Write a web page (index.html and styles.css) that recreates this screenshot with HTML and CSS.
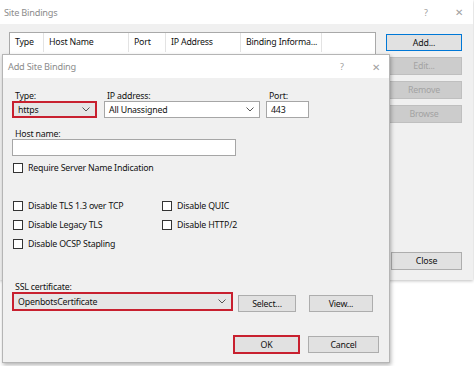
FILE: index.html
```html
<!DOCTYPE html>
<html lang="en">
<head>
    <meta charset="UTF-8">
    <meta name="viewport" content="width=device-width, initial-scale=1.0">
    <title>Site Bindings</title>
    <link rel="stylesheet" href="styles.css">
</head>
<body>

    <!-- Site Bindings window (behind) -->
    <div class="window">
        <div class="titlebar">
            <span class="title">Site Bindings</span>
            <span class="help">?</span>
            <span class="close-x">&#x2715;</span>
        </div>
        <div class="window-body">
            <div class="list">
                <div class="list-head">
                    <div class="col col-type">Type</div>
                    <div class="col col-host">Host Name</div>
                    <div class="col col-port">Port</div>
                    <div class="col col-ip">IP Address</div>
                    <div class="col col-bind">Binding Informa...</div>
                </div>
            </div>
            <div class="side-buttons">
                <button class="btn btn-default">Add...</button>
                <button class="btn" disabled>Edit...</button>
                <button class="btn" disabled>Remove</button>
                <button class="btn" disabled>Browse</button>
                <button class="btn btn-close">Close</button>
            </div>
        </div>
    </div>

    <!-- Add Site Binding dialog (on top) -->
    <div class="dialog">
        <div class="titlebar dialog-titlebar">
            <span class="title">Add Site Binding</span>
            <span class="help">?</span>
            <span class="close-x">&#x2715;</span>
        </div>
        <div class="dialog-body">
            <div class="field-row">
                <div class="field field-type">
                    <label>Type:</label>
                    <div class="combo combo-list marked">
                        <span>https</span>
                        <svg class="chevron" width="8" height="5" viewBox="0 0 8 5"><polyline points="0.5,0.5 4,4 7.5,0.5" fill="none" stroke="#555" stroke-width="1"/></svg>
                    </div>
                </div>
                <div class="field field-ip">
                    <label>IP address:</label>
                    <div class="combo">
                        <span>All Unassigned</span>
                        <svg class="chevron" width="8" height="5" viewBox="0 0 8 5"><polyline points="0.5,0.5 4,4 7.5,0.5" fill="none" stroke="#555" stroke-width="1"/></svg>
                    </div>
                </div>
                <div class="field field-port">
                    <label>Port:</label>
                    <div class="textbox">443</div>
                </div>
            </div>

            <div class="field field-host">
                <label>Host name:</label>
                <div class="textbox"></div>
            </div>

            <div class="check check-sni"><span class="box"></span>Require Server Name Indication</div>

            <div class="check-grid">
                <div class="check"><span class="box"></span>Disable TLS 1.3 over TCP</div>
                <div class="check"><span class="box"></span>Disable QUIC</div>
                <div class="check"><span class="box"></span>Disable Legacy TLS</div>
                <div class="check"><span class="box"></span>Disable HTTP/2</div>
                <div class="check"><span class="box"></span>Disable OCSP Stapling</div>
            </div>

            <div class="field field-ssl">
                <label>SSL certificate:</label>
                <div class="ssl-row">
                    <div class="combo combo-list marked ssl-combo">
                        <span>OpenbotsCertificate</span>
                        <svg class="chevron" width="8" height="5" viewBox="0 0 8 5"><polyline points="0.5,0.5 4,4 7.5,0.5" fill="none" stroke="#555" stroke-width="1"/></svg>
                    </div>
                    <button class="btn btn-select">Select...</button>
                    <button class="btn btn-view">View...</button>
                </div>
            </div>

            <div class="dialog-actions">
                <button class="btn btn-ok marked">OK</button>
                <button class="btn btn-cancel">Cancel</button>
            </div>
        </div>
    </div>

</body>
</html>
```

FILE: styles.css
```css
body {
    margin: 0;
    width: 474px;
    height: 366px;
    overflow: hidden;
    background-color: #ffffff;
    font-family: "Noto Sans", "Open Sans", sans-serif;
    font-size: 8.8px;
    letter-spacing: -0.2px;
    color: #111111;
    position: relative;
}
.window {
    width: 473px;
    height: 280px;
    background-color: #f0f0f0;
    box-shadow: 0 1px 3px rgba(0, 0, 0, 0.25);
}
.titlebar {
    height: 24px;
    background-color: #ffffff;
    display: flex;
    align-items: center;
    padding-left: 4px;
    color: #8c8c8c;
    font-size: 9.2px;
}
.titlebar .title {
    flex: 1;
}
.titlebar .help {
    width: 31px;
    font-size: 9px;
    color: #a0a0a0;
}
.titlebar .close-x {
    width: 18px;
    font-size: 10px;
    color: #a0a0a0;
}
.window-body {
    display: flex;
    padding: 8px 10px 0 9px;
}
.list {
    width: 365px;
    height: 220px;
    background-color: #ffffff;
    border: 1px solid #a9a9a9;
}
.list-head {
    display: flex;
    height: 19px;
}
.col {
    padding-left: 5px;
    line-height: 19px;
    border-right: 1px solid #e3e3e3;
    white-space: nowrap;
    overflow: hidden;
}
.col-type { width: 28px; }
.col-host { width: 79px; }
.col-port { width: 31px; }
.col-ip { width: 69px; }
.col-bind { width: 75px; }

.side-buttons {
    display: flex;
    flex-direction: column;
    margin-left: 10px;
    width: 76px;
}
.btn {
    font-family: inherit;
    font-size: 8.8px;
    letter-spacing: -0.2px;
    color: #111111;
    background-color: #e1e1e1;
    border: 1px solid #adadad;
    height: 18px;
    padding: 0;
    margin: 0;
}
.btn:disabled {
    background-color: #cccccc;
    border-color: #bfbfbf;
    color: #a3a3a3;
}
.side-buttons .btn {
    margin-bottom: 6px;
}
.side-buttons .btn-default {
    margin-top: 2px;
    height: 17px;
    border: 1px solid #0078d7;
    margin-bottom: 6px;
}
.side-buttons .btn-close {
    margin-top: 123px;
    margin-left: 5px;
    width: 71px;
}

/* dialog */
.dialog {
    position: absolute;
    left: 2px;
    top: 54px;
    width: 386px;
    height: 307px;
    background-color: #f0f0f0;
    border: 1px solid #b5b5b5;
    box-shadow: 1px 2px 4px rgba(0, 0, 0, 0.3);
}
.dialog-titlebar {
    height: 23px;
    padding-left: 5px;
}
.dialog-titlebar .help {
    width: 32px;
}
.dialog-titlebar .close-x {
    width: 17px;
}
.dialog-body {
    padding: 10px 0 0 9px;
}
label {
    display: block;
    line-height: 16px;
    height: 13px;
    padding-left: 3px;
}
.field-row {
    display: flex;
}
.field-type { width: 85px; margin-right: 7px; }
.field-ip { width: 156px; margin-right: 6px; }
.field-port { width: 43px; }
.combo, .textbox {
    box-sizing: border-box;
    height: 17px;
    background-color: #ffffff;
    border: 1px solid #a6a6a6;
    display: flex;
    align-items: center;
    padding-left: 4px;
    white-space: nowrap;
}
.combo span {
    flex: 1;
}
.combo-list {
    background-color: #e6e6e6;
}
.chevron {
    margin-right: 5px;
}
.marked {
    border: 2px solid #c8202f;
}
.field-host {
    margin-top: 8px;
    width: 224px;
}
.check {
    display: flex;
    align-items: center;
    height: 19px;
    white-space: nowrap;
}
.check .box {
    box-sizing: border-box;
    width: 10px;
    height: 10px;
    border: 1px solid #333333;
    background-color: #ffffff;
    margin: 0 5px 0 1px;
}
.check-sni {
    margin-top: 2px;
}
.check-grid {
    margin-top: 19px;
    display: grid;
    grid-template-columns: 149px auto;
}
.field-ssl {
    margin-top: 26px;
}
.ssl-row {
    display: flex;
    align-items: flex-start;
}
.ssl-combo {
    width: 221px;
    height: 19px;
}
.btn-select {
    width: 58px;
    height: 17px;
    margin: 3px 0 0 5px;
}
.btn-view {
    width: 64px;
    height: 17px;
    margin: 3px 0 0 13px;
}
.dialog-actions {
    display: flex;
    margin-top: 23px;
    padding-left: 221px;
}
.btn-ok {
    width: 67px;
    height: 19px;
    background-color: #e1e1e1;
}
.btn-cancel {
    width: 71px;
    height: 17px;
    margin: 1px 0 0 8px;
}
```
